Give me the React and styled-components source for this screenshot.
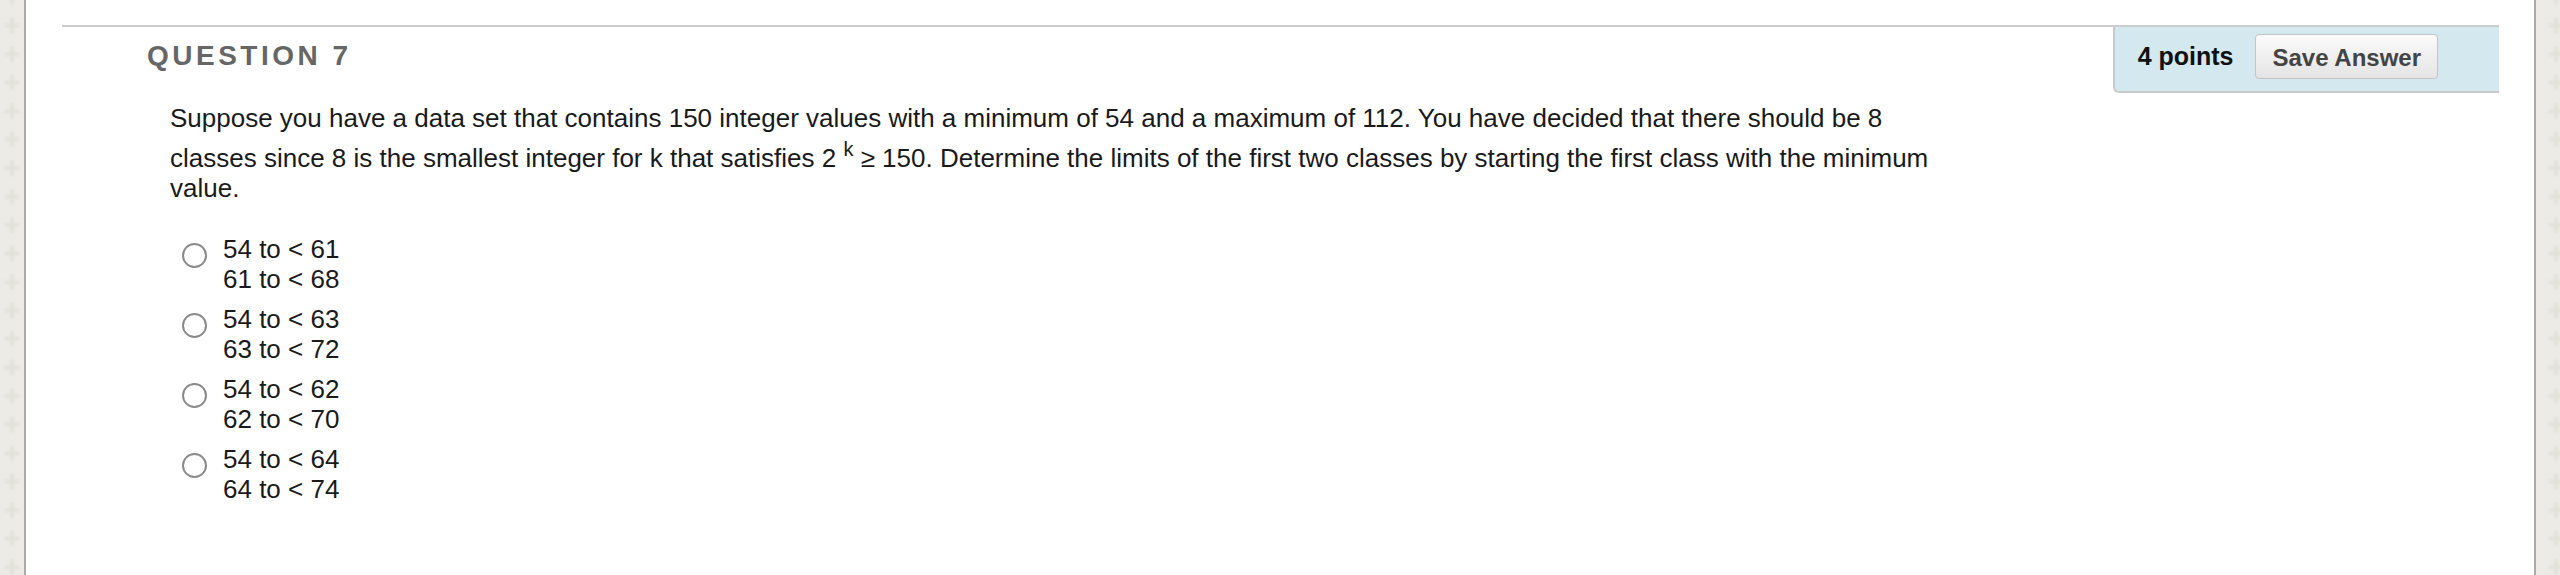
import React from "react";
import styled, { createGlobalStyle } from "styled-components";

const GlobalStyle = createGlobalStyle`
  html, body { margin: 0; padding: 0; background: #ffffff; }
  body { font-family: "Liberation Sans", Arial, Helvetica, sans-serif; }
`;

const Page = styled.div`
  display: flex;
  height: 575px;
  width: 100%;
  background: #ffffff;
  overflow: hidden;
`;

const Gutter = styled.div`
  flex: 0 0 24px;
  position: relative;
  background: #ecebe6;
  ${(p) => (p.$side === "left" ? "border-right" : "border-left")}: 2px solid #ababab;
  svg { display: block; width: 100%; height: 100%; }
`;

const Main = styled.main`
  flex: 1;
  padding: 25px 35px 0 36px;
  min-width: 0;
`;

const Question = styled.section`
  border-top: 2px solid #cccccc;
  color: #1a1a1a;
`;

const HeaderRow = styled.div`
  display: flex;
  justify-content: space-between;
  align-items: flex-start;
`;

const Heading = styled.h2`
  margin: 13px 0 0 85px;
  font-size: 28px;
  line-height: 32px;
  font-weight: bold;
  letter-spacing: 3.5px;
  color: #666666;
`;

const PointsBox = styled.div`
  display: flex;
  align-items: center;
  gap: 22px;
  padding: 7px 61px 12px 23px;
  background: #d4e8ef;
  border-left: 2px solid #c9c9c9;
  border-bottom: 2px solid #c9c9c9;
  border-bottom-left-radius: 6px;
`;

const Points = styled.span`
  font-size: 25px;
  font-weight: bold;
  color: #111111;
`;

const SaveButton = styled.button`
  height: 45px;
  padding: 3px 16px 0;
  font-family: "Liberation Sans", Arial, sans-serif;
  font-size: 24px;
  font-weight: bold;
  color: #444444;
  background: linear-gradient(#fbfbfb, #e4e4e4);
  border: 1px solid #c4c4c4;
  border-radius: 4px;
  cursor: pointer;
`;

const Prompt = styled.p`
  margin: 10px 0 0 108px;
  max-width: 1798px;
  font-size: 26px;
  line-height: 30px;
  color: #1a1a1a;
`;

const Sup = styled.sup`
  font-size: 20px;
  line-height: 32px;
  vertical-align: 11px;
`;

const Options = styled.ul`
  list-style: none;
  margin: 31px 0 0 120px;
  padding: 0;
`;

const Option = styled.li`
  display: flex;
  align-items: flex-start;
  gap: 16px;
  margin-bottom: 10px;
`;

const Radio = styled.span`
  flex: 0 0 auto;
  box-sizing: border-box;
  width: 25px;
  height: 25px;
  margin-top: 9px;
  border: 2px solid #8a8a8a;
  border-radius: 50%;
  background: #ffffff;
`;

const OptionText = styled.div`
  font-size: 26px;
  line-height: 30px;
  color: #1a1a1a;
`;

const Texture = ({ id, cx }) => (
  <svg aria-hidden="true">
    <defs>
      <filter id={id + "b"} x="-50%" y="-50%" width="200%" height="200%">
        <feGaussianBlur stdDeviation="1" />
      </filter>
      <pattern id={id} x="0" y="11" width="24" height="28.5" patternUnits="userSpaceOnUse">
        <g filter={`url(#${id}b)`} fill="#e3e1da">
          <rect x={cx - 2} y="7" width="4" height="15" />
          <rect x={cx - 7.5} y="12.5" width="15" height="4" />
        </g>
      </pattern>
    </defs>
    <rect width="100%" height="100%" fill={`url(#${id})`} />
  </svg>
);

const choices = [
  ["54 to < 61", "61 to < 68"],
  ["54 to < 63", "63 to < 72"],
  ["54 to < 62", "62 to < 70"],
  ["54 to < 64", "64 to < 74"],
];

export default function App() {
  return (
    <>
      <GlobalStyle />
      <Page>
        <Gutter $side="left">
          <Texture id="texL" cx={12} />
        </Gutter>
        <Main>
          <Question>
            <HeaderRow>
              <Heading>QUESTION 7</Heading>
              <PointsBox>
                <Points>4 points</Points>
                <SaveButton type="button">Save Answer</SaveButton>
              </PointsBox>
            </HeaderRow>
            <Prompt>
              Suppose you have a data set that contains 150 integer values with a minimum of 54 and a
              maximum of 112. You have decided that there should be 8 classes since 8 is the smallest
              integer for k that satisfies 2 <Sup>k</Sup> ≥ 150. Determine the limits of the first two
              classes by starting the first class with the minimum value.
            </Prompt>
            <Options>
              {choices.map((c, i) => (
                <Option key={i}>
                  <Radio />
                  <OptionText>
                    {c[0]}
                    <br />
                    {c[1]}
                  </OptionText>
                </Option>
              ))}
            </Options>
          </Question>
        </Main>
        <Gutter $side="right">
          <Texture id="texR" cx={20} />
        </Gutter>
      </Page>
    </>
  );
}
